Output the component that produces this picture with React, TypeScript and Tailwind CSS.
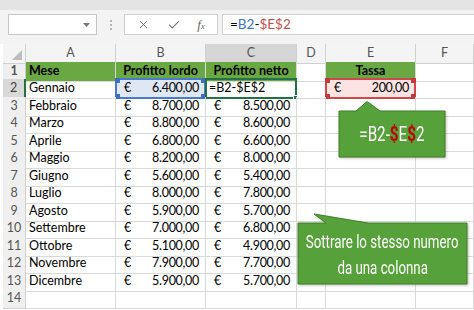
import { X, Check } from "lucide-react";

const cols = "grid grid-cols-[23px_90px_90px_91px_29px_90px_58px]";

const data: [string, string, string][] = [
  ["Gennaio", "6.400,00", ""],
  ["Febbraio", "8.700,00", "8.500,00"],
  ["Marzo", "8.800,00", "8.600,00"],
  ["Aprile", "6.800,00", "6.600,00"],
  ["Maggio", "8.200,00", "8.000,00"],
  ["Giugno", "5.600,00", "5.400,00"],
  ["Luglio", "8.000,00", "7.800,00"],
  ["Agosto", "5.900,00", "5.700,00"],
  ["Settembre", "7.000,00", "6.800,00"],
  ["Ottobre", "5.100,00", "4.900,00"],
  ["Novembre", "7.900,00", "7.700,00"],
  ["Dicembre", "5.900,00", "5.700,00"],
];

const cell = "border-r border-b border-[#d9d9d9] relative";
const rowHead =
  "border-r border-b border-[#d0d0d0] bg-[#efefef] text-[#555] flex items-center justify-center text-[12.5px]";

function Handles({ color }: { color: string }) {
  return (
    <>
      <span className={`absolute -left-[2px] -top-[2px] w-[5px] h-[5px] ${color}`} />
      <span className={`absolute -right-[2px] -top-[2px] w-[5px] h-[5px] ${color}`} />
      <span className={`absolute -left-[2px] -bottom-[2px] w-[5px] h-[5px] ${color}`} />
      <span className={`absolute -right-[2px] -bottom-[2px] w-[5px] h-[5px] ${color}`} />
    </>
  );
}

function Money({ value }: { value: string }) {
  return (
    <div className="h-full flex items-center justify-between pl-[8px] pr-[6px]">
      <span>€</span>
      <span className="tracking-[-0.3px]">{value}</span>
    </div>
  );
}

export default function App() {
  return (
    <div className="relative w-[474px] h-[310px] overflow-hidden bg-white font-['Lato',sans-serif] text-[12.5px] text-black">
      {/* top strip + formula bar */}
      <div className="h-[10px] bg-[#e4e4e4]" />
      <div className="h-[34px] bg-[#f3f3f3] flex items-start pt-[4px] pl-[8px]">
        <div className="w-[89px] h-[21px] bg-white border border-[#c6c6c6] flex items-center justify-end pr-[6px]">
          <svg width="7" height="4" viewBox="0 0 7 4">
            <path d="M0 0h7L3.5 4z" fill="#777" />
          </svg>
        </div>
        <div className="w-[27px] h-[21px] flex flex-col items-center justify-center gap-[2px]">
          <span className="w-[2px] h-[2px] bg-[#b5b5b5]" />
          <span className="w-[2px] h-[2px] bg-[#b5b5b5]" />
          <span className="w-[2px] h-[2px] bg-[#b5b5b5]" />
        </div>
        <div className="w-[94px] h-[21px] bg-white border border-[#d0d0d0] flex items-center justify-around px-[4px] text-[#666]">
          <X size={13} strokeWidth={1.6} />
          <Check size={14} strokeWidth={1.8} />
          <span className="font-['Liberation_Serif',serif] italic text-[13px] leading-none">
            f<span className="text-[9px]">x</span>
          </span>
        </div>
        <div className="ml-[4px] flex-1 h-[21px] bg-white border-y border-l border-[#d0d0d0] flex items-center pl-[7px] text-[13.5px]">
          <span>=</span>
          <span className="text-[#3f73c4]">B2</span>
          <span>-</span>
          <span className="text-[#c0504d]">$E$2</span>
        </div>
      </div>

      {/* sheet */}
      <div className="pl-[3px] border-l border-[#a8b8a8] -ml-px">
        <div className={`${cols} h-[18px] text-[#555] text-[12.5px]`}>
          <div className="border-r border-b border-[#d0d0d0] bg-[#f4f4f4] relative">
            <svg className="absolute right-[3px] bottom-[3px]" width="10" height="10" viewBox="0 0 10 10">
              <path d="M10 0v10H0z" fill="#bdbdbd" />
            </svg>
          </div>
          {["A", "B", "C", "D", "E", "F"].map((c) => (
            <div
              key={c}
              className={`border-r border-b border-[#d0d0d0] flex items-center justify-center ${
                c === "C" ? "bg-[#d6d6d6]" : "bg-[#f4f4f4]"
              }`}
            >
              {c}
            </div>
          ))}
        </div>

        {/* row 1 */}
        <div className={`${cols} h-[17px] font-bold`}>
          <div className={rowHead}>1</div>
          <div className={`${cell} bg-[#6aa843] flex items-center pl-[3px]`}>Mese</div>
          <div className={`${cell} bg-[#6aa843] flex items-center justify-center`}>Profitto lordo</div>
          <div className={`${cell} bg-[#6aa843] flex items-center justify-center`}>Profitto netto</div>
          <div className={cell} />
          <div className={`${cell} bg-[#6aa843] flex items-center justify-center`}>Tassa</div>
          <div className={cell} />
        </div>

        {data.map(([mese, lordo, netto], i) => {
          const n = i + 2;
          const h = n % 2 === 0 ? "h-[18px]" : "h-[17px]";
          const first = n === 2;
          return (
            <div key={mese} className={`${cols} ${h}`}>
              <div
                className={
                  first
                    ? "border-r-2 border-r-[#217346] border-b border-b-[#d0d0d0] bg-[#d8d8d8] text-[#444] flex items-center justify-center text-[12.5px]"
                    : rowHead
                }
              >
                {n}
              </div>
              <div className={`${cell} flex items-center pl-[3px]`}>{mese}</div>
              {first ? (
                <div className={`${cell} bg-[#dfe7f4]`}>
                  <div className="absolute inset-[-1px] border-2 border-[#4a7bc6]">
                    <Handles color="bg-[#3f6fbf]" />
                  </div>
                  <Money value={lordo} />
                </div>
              ) : (
                <div className={cell}>
                  <Money value={lordo} />
                </div>
              )}
              {first ? (
                <div className={cell}>
                  <div className="absolute inset-[-1px] border-2 border-[#217346]">
                    <span className="absolute -right-[3px] -bottom-[3px] w-[5px] h-[5px] bg-[#217346] border border-white" />
                  </div>
                  <div className="h-full flex items-center pl-[3px]">=B2-$E$2</div>
                </div>
              ) : (
                <div className={cell}>
                  <Money value={netto} />
                </div>
              )}
              <div className={cell} />
              {first ? (
                <div className={`${cell} bg-[#fbe3e3]`}>
                  <div className="absolute inset-[-1px] border-2 border-[#cc4a4c]">
                    <Handles color="bg-[#c23a3c]" />
                  </div>
                  <Money value="200,00" />
                </div>
              ) : (
                <div className={cell} />
              )}
              <div className={cell} />
            </div>
          );
        })}

        <div className={`${cols} h-[18px]`}>
          <div className={rowHead}>14</div>
          <div className={cell} />
          <div className={cell} />
          <div className={cell} />
          <div className={cell} />
          <div className={cell} />
          <div className={cell} />
        </div>
      </div>

      {/* callout: formula */}
      <div className="absolute left-[338px] top-[100px] w-[108px] h-[58px] drop-shadow-[1px_1px_1px_rgba(0,0,0,0.25)]">
        <svg className="absolute inset-0" width="108" height="58" viewBox="0 0 108 58">
          <polygon
            points="1,11 18,11 29,1.5 42,11 107,11 107,57 1,57"
            fill="#56a139"
            stroke="#3f7f2a"
            strokeWidth="1"
          />
        </svg>
        <div className="absolute left-0 right-0 top-[11px] bottom-[1px] flex items-center justify-center">
          <span className="inline-block scale-x-[0.76] font-['Roboto',sans-serif] text-[20px] text-white whitespace-nowrap">
            =B2-<span className="text-[#c00000] font-bold">$</span>E<span className="text-[#c00000] font-bold">$</span>2
          </span>
        </div>
      </div>

      {/* callout: description */}
      <div className="absolute left-[297px] top-[213px] w-[171px] h-[72px] drop-shadow-[1px_1px_1px_rgba(0,0,0,0.25)]">
        <svg className="absolute inset-0" width="171" height="72" viewBox="0 0 171 72">
          <polygon
            points="1,10 29,10 17,1 71,10 170,10 170,71 1,71"
            fill="#56a139"
            stroke="#3f7f2a"
            strokeWidth="1"
          />
        </svg>
        <div className="absolute left-0 right-0 top-[10px] bottom-[1px] flex flex-col items-center justify-center pt-[3px] font-['Roboto',sans-serif] text-[19px] leading-[26px] text-white">
          <span className="inline-block scale-x-[0.7] whitespace-nowrap">Sottrare lo stesso numero</span>
          <span className="inline-block scale-x-[0.7] whitespace-nowrap">da una colonna</span>
        </div>
      </div>
    </div>
  );
}
